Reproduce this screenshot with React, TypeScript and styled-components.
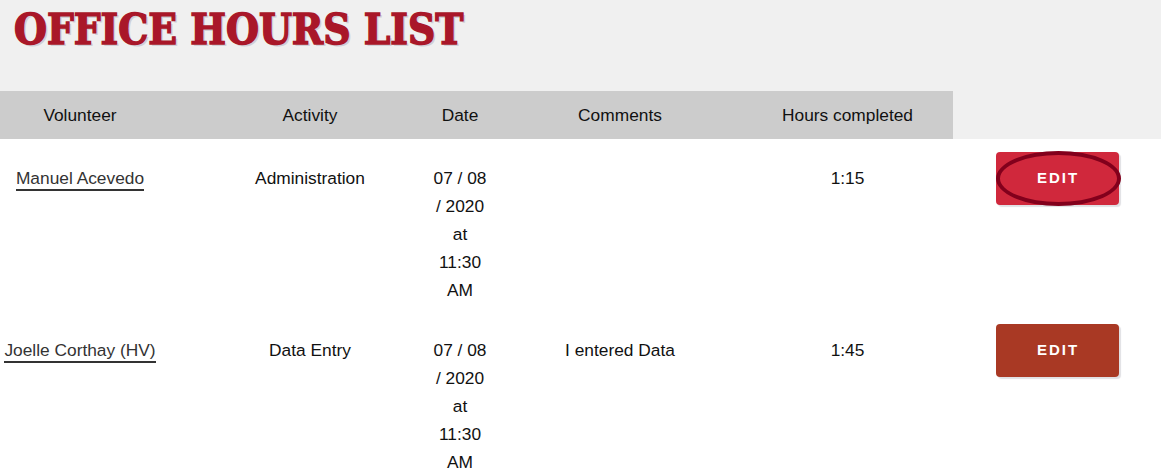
import React from "react";
import styled, { createGlobalStyle } from "styled-components";

const GlobalStyle = createGlobalStyle`
  html, body {
    margin: 0;
    padding: 0;
    background: #fff;
    overflow: hidden;
  }
  body {
    font-family: "Liberation Sans", Arial, sans-serif;
    font-size: 17.33px;
    color: #111;
  }
`;

const COLUMNS = "160px 260px 80px 240px 213px 208px";

const Page = styled.div`
  height: 475px;
  overflow: hidden;
`;

const Banner = styled.header`
  background: #f0f0f0;
`;

const Title = styled.h1`
  margin: 0;
  height: 91px;
  box-sizing: border-box;
  padding: 4px 0 0 14px;
  font-family: "DejaVu Serif Condensed", "DejaVu Serif", serif;
  font-size: 42px;
  line-height: 52px;
  font-weight: 700;
  color: #a91729;
  -webkit-text-stroke: 1.4px #a91729;
  text-shadow: 2px 2px 0 #d0d0d8;
  white-space: nowrap;
`;

const HeadRow = styled.div`
  display: grid;
  grid-template-columns: ${COLUMNS};
  height: 48px;
`;

const HeadCell = styled.div<{ $shift?: number; $blank?: boolean }>`
  display: flex;
  align-items: center;
  justify-content: center;
  padding-left: ${(p) => p.$shift ?? 0}px;
  background: ${(p) => (p.$blank ? "transparent" : "#ccc")};
`;

const Row = styled.div`
  display: grid;
  grid-template-columns: ${COLUMNS};
  height: 172px;
  box-sizing: border-box;
  padding-top: 13px;
  line-height: 28px;
  text-align: center;
`;

const Cell = styled.div<{ $shift?: number }>`
  padding: 12px 0 0 ${(p) => p.$shift ?? 0}px;
`;

const DateCell = styled.div`
  padding: 12px 11px 0;
`;

const NameLink = styled.a`
  color: #333;
  text-decoration: none;
  border-bottom: 2px solid #333;
  padding-bottom: 1px;
`;

const ActionCell = styled.div`
  display: flex;
  justify-content: center;
`;

const EditButton = styled.button<{ $focused?: boolean }>`
  position: relative;
  width: 123px;
  height: 53px;
  padding: 0 0 2px 2px;
  border: 0;
  border-radius: 4px;
  background: ${(p) => (p.$focused ? "#d0283c" : "#a93924")};
  box-shadow: 2px 2px 1px #e0e0e4;
  color: #fff;
  font-family: "Liberation Sans", Arial, sans-serif;
  font-size: 15px;
  font-weight: 700;
  letter-spacing: 2px;

  ${(p) =>
    p.$focused &&
    `
    &::after {
      content: "";
      position: absolute;
      inset: -1px -2px -1px 0;
      border: 4px solid #82001c;
      border-radius: 50%;
    }
  `}
`;

const entries = [
  {
    name: "Manuel Acevedo",
    activity: "Administration",
    date: "07 / 08 / 2020 at 11:30 AM",
    comments: "",
    hours: "1:15",
    focused: true,
  },
  {
    name: "Joelle Corthay (HV)",
    activity: "Data Entry",
    date: "07 / 08 / 2020 at 11:30 AM",
    comments: "I entered Data",
    hours: "1:45",
    focused: false,
  },
];

const App = () => (
  <Page>
    <GlobalStyle />
    <Banner>
      <Title>OFFICE HOURS LIST</Title>
      <HeadRow>
        <HeadCell>Volunteer</HeadCell>
        <HeadCell $shift={40}>Activity</HeadCell>
        <HeadCell>Date</HeadCell>
        <HeadCell>Comments</HeadCell>
        <HeadCell $shift={2}>Hours completed</HeadCell>
        <HeadCell $blank />
      </HeadRow>
    </Banner>
    {entries.map((entry) => (
      <Row key={entry.name}>
        <Cell>
          <NameLink href="#">{entry.name}</NameLink>
        </Cell>
        <Cell $shift={40}>{entry.activity}</Cell>
        <DateCell>{entry.date}</DateCell>
        <Cell>{entry.comments}</Cell>
        <Cell $shift={2}>{entry.hours}</Cell>
        <ActionCell>
          <EditButton $focused={entry.focused}>EDIT</EditButton>
        </ActionCell>
      </Row>
    ))}
  </Page>
);

export default App;
